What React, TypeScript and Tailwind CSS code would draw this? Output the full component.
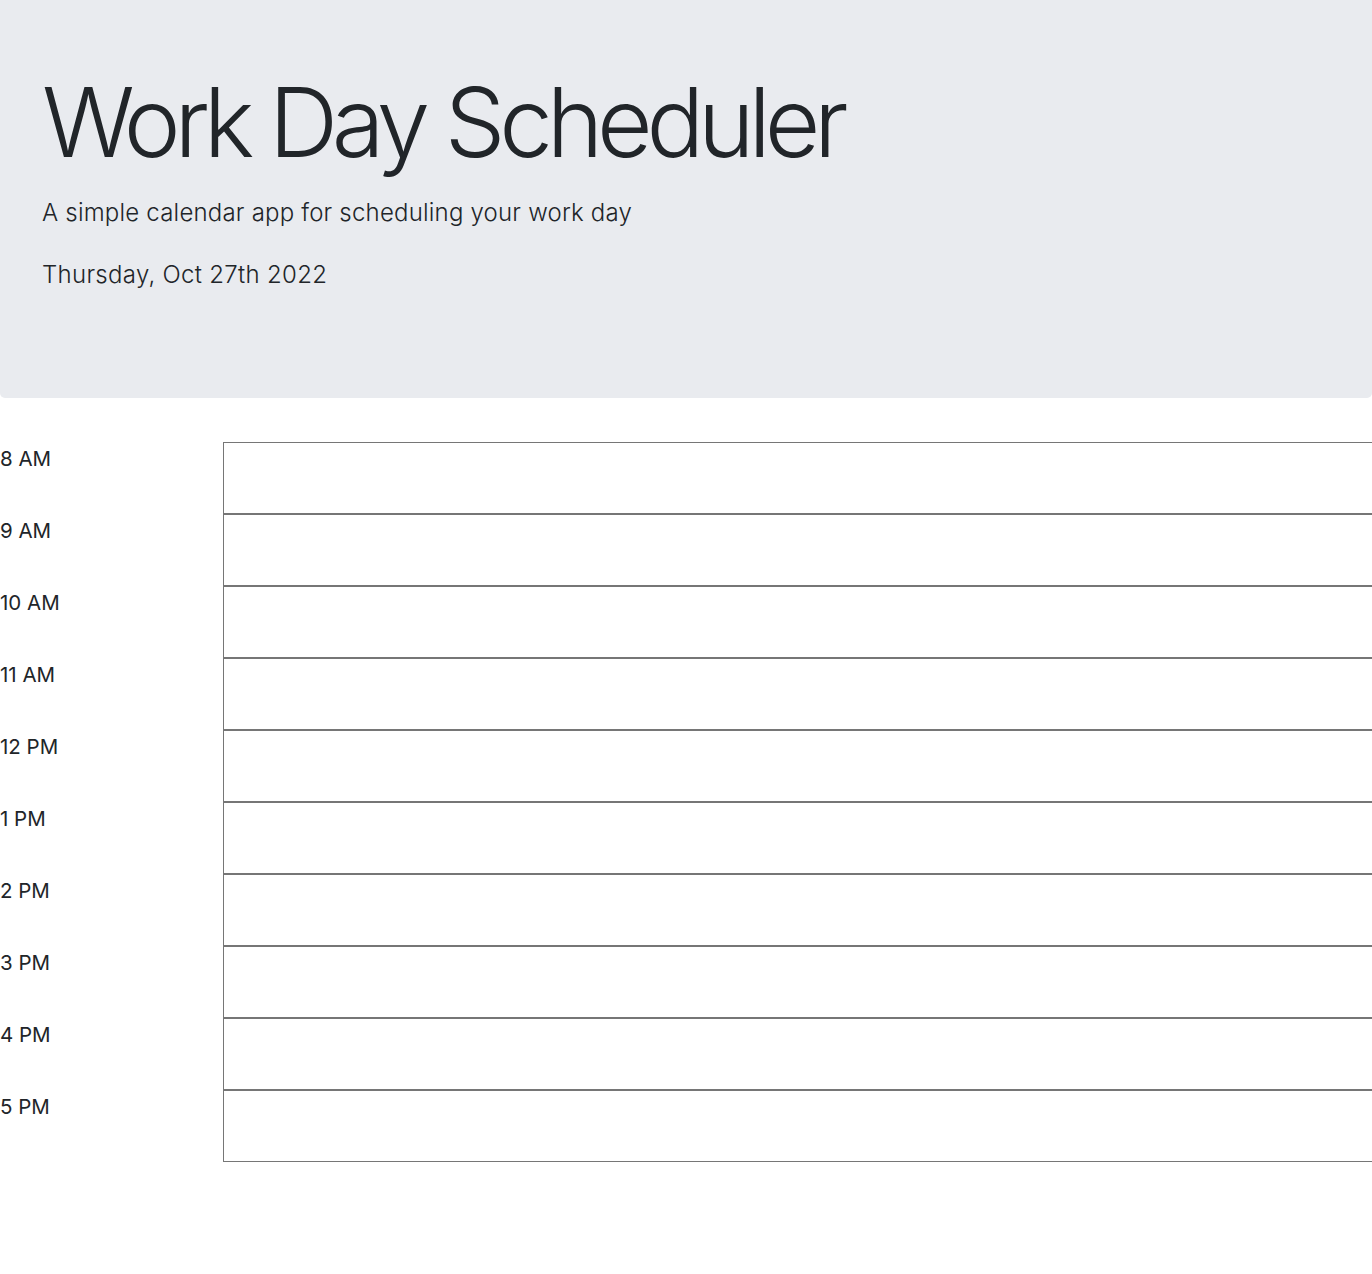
const hours = ["8 AM", "9 AM", "10 AM", "11 AM", "12 PM", "1 PM", "2 PM", "3 PM", "4 PM", "5 PM"];

function HourRow({ label }: { label: string }) {
  return (
    <div className="flex h-[72px]">
      <div className="w-[223px] shrink-0 pt-[2px] text-[20.5px] leading-[30px] text-[#212529]">{label}</div>
      <textarea className="h-full w-[1200px] shrink-0 resize-none border border-[#767676] bg-white outline-none" />
    </div>
  );
}

export default function App() {
  return (
    <div className="min-h-[1274px] overflow-hidden bg-white font-['Inter','Liberation_Sans',sans-serif] text-[#212529]">
      <header className="h-[398px] rounded-b-[5px] bg-[#e9ebef] pl-[42px] pt-[65px]">
        <h1 className="mb-[15px] text-[96px] font-light leading-[1.2] tracking-[-6.2px]">Work Day Scheduler</h1>
        <p className="text-[24px] font-light leading-[36px] tracking-[0.2px]">A simple calendar app for scheduling your work day</p>
        <p className="mt-[26px] text-[24px] font-light leading-[36px] tracking-[0.3px]">Thursday, Oct 27th 2022</p>
      </header>

      <main className="mt-[44px] flex flex-col">
        {hours.map((h) => (
          <HourRow key={h} label={h} />
        ))}
      </main>
    </div>
  );
}
